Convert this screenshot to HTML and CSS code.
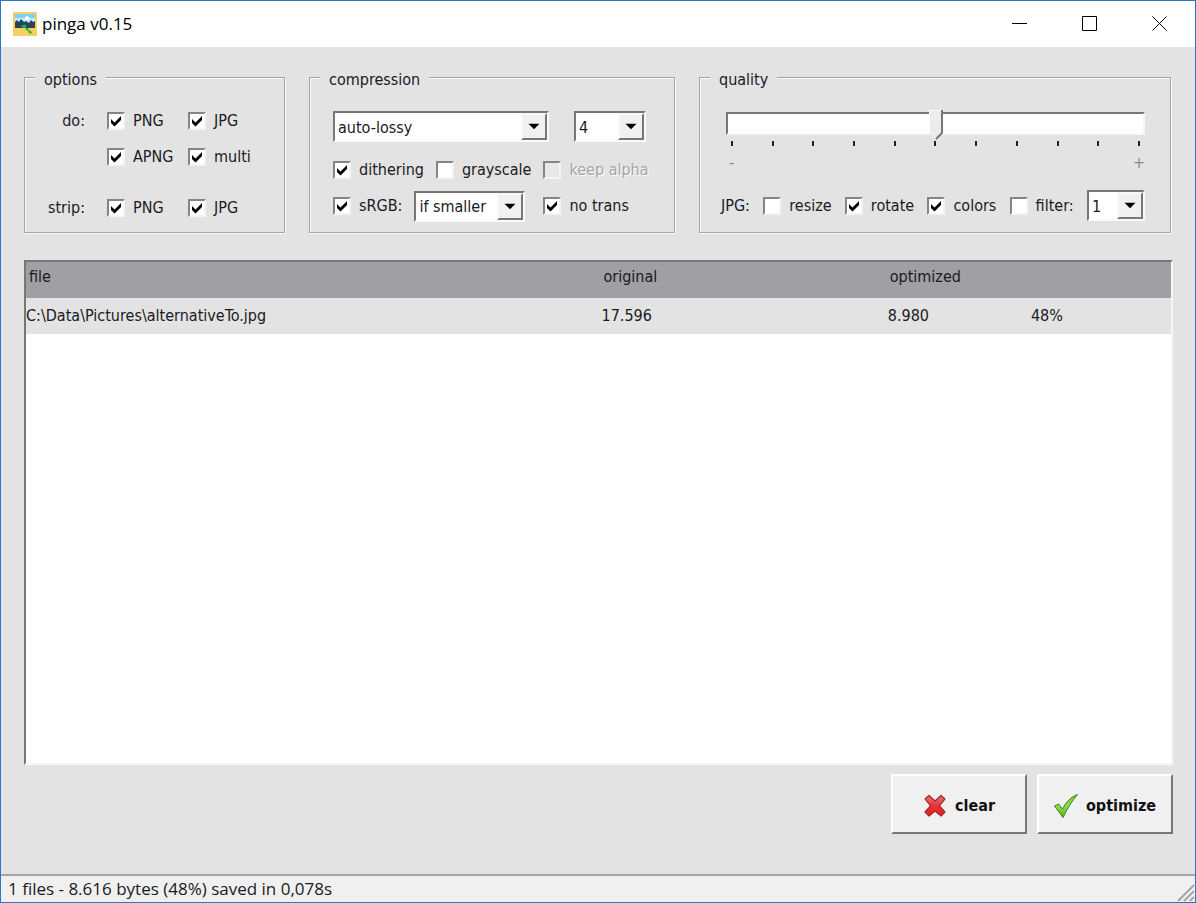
FILE: index.html
```html
<!DOCTYPE html>
<html lang="en">
<head>
  <meta charset="UTF-8" />
  <meta name="viewport" content="width=device-width, initial-scale=1.0"/>
  <title>pinga v0.15</title>
  <link rel="stylesheet" href="styles.css">
</head>
<body>

  <div class="window">
    <header class="titlebar">
      <svg class="app-icon" viewBox="0 0 24 24" aria-hidden="true">
        <rect width="24" height="24" fill="#f5d063"/>
        <rect x="2" y="2" width="20" height="14" fill="#7fd0f5"/>
        <rect x="2" y="6" width="20" height="6" fill="#c5ecfb"/>
        <circle cx="14" cy="6" r="2" fill="#fff"/>
        <path d="M2 10l2-2 2 2 2-3 3 3 2-1 3 2 2-3 2 2 2-1v7H2z" fill="#2c4258"/>
        <path d="M8 13.500l5-1v4l-2-1-1 1zM12 15l3 1 1 3-3-1zM15 18l3 1 1 3-3-1z" fill="#22b14c"/>
      </svg>
      <h1>pinga v0.15</h1>
      <div class="window-controls">
        <button type="button" aria-label="Minimize">
          <svg viewBox="0 0 16 16"><path d="M0 7.500h15"/></svg>
        </button>
        <button type="button" aria-label="Maximize">
          <svg viewBox="0 0 16 16"><path d="M.5.5h14v14H.5z"/></svg>
        </button>
        <button type="button" aria-label="Close">
          <svg viewBox="0 0 16 16"><path d="M.5.500l14 14M14.500.5l-14 14"/></svg>
        </button>
      </div>
    </header>

    <main>
      <form class="settings">
        <fieldset>
          <legend>options</legend>
          <div class="options-grid">
            <span class="row-label">do:</span>
            <label><input type="checkbox" checked />PNG</label>
            <label><input type="checkbox" checked />JPG</label>
            <span></span>
            <label><input type="checkbox" checked />APNG</label>
            <label><input type="checkbox" checked />multi</label>
            <span class="row-label">strip:</span>
            <label><input type="checkbox" checked />PNG</label>
            <label><input type="checkbox" checked />JPG</label>
          </div>
        </fieldset>

        <fieldset>
          <legend>compression</legend>
          <div class="compression">
            <div class="combos">
              <span class="combo mode">
                <select aria-label="Compression mode"><option>auto-lossy</option></select>
                <svg viewBox="0 0 24 24" aria-hidden="true"><path d="M6 9h12l-6 6z"/></svg>
              </span>
              <span class="combo level">
                <select aria-label="Compression level"><option>4</option></select>
                <svg viewBox="0 0 24 24" aria-hidden="true"><path d="M6 9h12l-6 6z"/></svg>
              </span>
            </div>
            <div class="checks">
              <label><input type="checkbox" checked />dithering</label>
              <label><input type="checkbox" />grayscale</label>
              <label class="disabled"><input type="checkbox" disabled />keep alpha</label>
            </div>
            <div class="checks">
              <label><input type="checkbox" checked />sRGB:</label>
              <span class="combo srgb">
                <select aria-label="sRGB"><option>if smaller</option></select>
                <svg viewBox="0 0 24 24" aria-hidden="true"><path d="M6 9h12l-6 6z"/></svg>
              </span>
              <label class="trans"><input type="checkbox" checked />no trans</label>
            </div>
          </div>
        </fieldset>

        <fieldset>
          <legend>quality</legend>
          <div class="quality">
            <input class="slider" type="range" min="0" max="10" value="5" aria-label="Quality" />
            <div class="ticks">
              <i></i><i></i><i></i><i></i><i></i><i></i><i></i><i></i><i></i><i></i><i></i>
            </div>
            <div class="range-ends"><span>-</span><span>+</span></div>
            <div class="jpg-row">
              <span>JPG:</span>
              <label><input type="checkbox" />resize</label>
              <label><input type="checkbox" checked />rotate</label>
              <label><input type="checkbox" checked />colors</label>
              <label><input type="checkbox" />filter:</label>
              <span class="combo filter">
                <select aria-label="Filter"><option>1</option></select>
                <svg viewBox="0 0 24 24" aria-hidden="true"><path d="M6 9h12l-6 6z"/></svg>
              </span>
            </div>
          </div>
        </fieldset>
      </form>

      <div class="file-list">
        <table>
          <thead>
            <tr><th class="col-file">file</th><th class="col-size">original</th><th class="col-opt">optimized</th><th class="col-ratio"></th></tr>
          </thead>
          <tbody>
            <tr><td>C:\Data\Pictures\alternativeTo.jpg</td><td>17.596</td><td>8.980</td><td>48%</td></tr>
          </tbody>
        </table>
      </div>

      <div class="actions">
        <button type="button">
          <svg viewBox="0 0 24 24" aria-hidden="true">
            <defs>
              <linearGradient id="red" x1="0" y1="0" x2="0" y2="1">
                <stop offset="0" stop-color="#e8767a"/>
                <stop offset=".5" stop-color="#e0353a"/>
                <stop offset="1" stop-color="#f21d1d"/>
              </linearGradient>
            </defs>
            <path d="M2 5l4-3.500 6 5.500 6-5.500 4 3.500-5.500 7 5.500 6-4 4-6-5-6 5-4-4 5.500-6z" fill="url(#red)" stroke="#a3262a" stroke-width="1.200" stroke-linejoin="round"/>
          </svg>
          clear
        </button>
        <button type="button">
          <svg viewBox="0 0 24 24" aria-hidden="true">
            <defs>
              <linearGradient id="green" x1="0" y1="0" x2="0" y2="1">
                <stop offset="0" stop-color="#7ccb3f"/>
                <stop offset=".5" stop-color="#8fdc4a"/>
                <stop offset="1" stop-color="#4fb61c"/>
              </linearGradient>
            </defs>
            <path d="M.5 12l4-2 4 5C12 8 17 3 23.500.500 18 7 13 15 9 23.500z" fill="url(#green)" stroke="#3f8222" stroke-width="1" stroke-linejoin="round"/>
          </svg>
          optimize
        </button>
      </div>
    </main>

    <footer class="statusbar">
      <p>1 files - 8.616 bytes (48%) saved in 0,078s</p>
      <svg class="grip" viewBox="0 0 18 18" aria-hidden="true"><path d="M1 17L17 1M7 17L17 7M13 17l4-4"/></svg>
    </footer>
  </div>

</body>
</html>
```

FILE: styles.css
```css
* {
  box-sizing: border-box;
  margin: 0;
  padding: 0;
}

body {
  font-family: "DejaVu Sans Condensed", "Noto Sans", sans-serif;
  font-size: 16px;
  line-height: 20px;
  color: #1a1a22;
}

.window {
  display: flex;
  flex-direction: column;
  min-height: 100vh;
  background: #e3e3e3;
  border: 1px solid #2a78bd;
}

/* title bar */
.titlebar {
  display: flex;
  align-items: center;
  height: 46px;
  padding-left: 12px;
  background: #fff;
}

.app-icon {
  width: 24px;
  height: 24px;
}

h1 {
  flex: 1;
  margin-left: 5px;
  font-family: "Open Sans", sans-serif;
  font-size: 17px;
  font-weight: normal;
  color: #000;
}

.window-controls {
  display: flex;
}

.window-controls button {
  display: flex;
  align-items: center;
  justify-content: center;
  width: 70px;
  height: 46px;
  background: none;
  border: none;
}

.window-controls svg {
  width: 16px;
  height: 16px;
  fill: none;
  stroke: #000;
}

main {
  display: flex;
  flex: 1;
  flex-direction: column;
  padding: 17px 22px 40px 23px;
}

/* option groups */
.settings {
  display: grid;
  grid-template-columns: 261fr 366fr 472fr;
  gap: 24px;
  padding-right: 2px;
}

fieldset {
  min-width: 0;
  height: 169px;
  border: 1px solid #a5a5a5;
  box-shadow: 1px 1px 0 #fafafa, inset 1px 1px 0 #fafafa;
}

legend {
  margin-left: 10px;
  padding: 6px 9px 0;
  background: #e3e3e3;
}

label {
  display: flex;
  align-items: center;
  gap: 8px;
  white-space: nowrap;
}

input[type="checkbox"] {
  flex: none;
  appearance: none;
  width: 18px;
  height: 18px;
  background: #fff;
  border: 2px solid;
  border-color: #858585 #f4f4f4 #f4f4f4 #858585;
}

input[type="checkbox"]:checked {
  background: #fff url("data:image/svg+xml,%3Csvg xmlns='http://www.w3.org/2000/svg' viewBox='0 0 14 14'%3E%3Cpath d='M2 5l3.500 3.500L12 2v4l-6.500 6.500L2 9z'/%3E%3C/svg%3E") center / 14px 14px;
}

input[type="checkbox"]:disabled {
  background: #e8e8e8;
}

.disabled {
  color: #a5a5a5;
  text-shadow: 1px 1px 0 #fff;
}

.options-grid {
  display: grid;
  grid-template-columns: 60px 59px 1fr;
  grid-template-rows: 36px 36px 66px;
  column-gap: 22px;
  align-items: center;
  padding-top: 13px;
}

.row-label {
  text-align: right;
}

/* drop-downs */
.combo {
  display: grid;
  height: 31px;
  background: #fff;
  border: 2px solid;
  border-color: #777 #fafafa #fafafa #777;
}

.combo select,
.combo svg {
  grid-area: 1 / 1;
}

.combo select {
  appearance: none;
  width: 100%;
  padding: 2px 0 0 3px;
  font: inherit;
  color: inherit;
  background: none;
  border: none;
}

.combo svg {
  justify-self: end;
  width: 26px;
  height: 100%;
  background: #f0f0f0;
  border: 2px solid;
  border-color: #f8f8f8 #777 #777 #f8f8f8;
  pointer-events: none;
}

.mode {
  width: 216px;
}

.level {
  width: 72px;
}

.srgb {
  width: 111px;
}

.filter {
  width: 58px;
}

.compression {
  padding: 21px 22px 0 23px;
}

.combos {
  display: flex;
  gap: 25px;
  margin-bottom: 10px;
}

.checks {
  display: flex;
  align-items: center;
  gap: 12px;
  height: 36px;
}

.trans {
  margin-left: 6px;
}

/* quality slider */
.quality {
  padding: 18px 25px 0 21px;
}

.slider {
  display: block;
  appearance: none;
  width: calc(100% - 5px);
  height: 30px;
  margin-left: 5px;
  background: none;
}

.slider::-webkit-slider-runnable-track {
  height: 23px;
  background: #fff;
  border: 2px solid;
  border-color: #777 #f6f6f6 #f6f6f6 #777;
}

.slider::-webkit-slider-thumb {
  appearance: none;
  width: 14px;
  height: 30px;
  margin-top: -4px;
  background: url("data:image/svg+xml,%3Csvg xmlns='http://www.w3.org/2000/svg' viewBox='0 0 14 30'%3E%3Cpath d='M0 0h14v23l-7 7-7-7z' fill='%23ececec'/%3E%3Cpath d='M.5 23V.5H13' fill='none' stroke='%23fff'/%3E%3Cpath d='M13 0v23l-6 6' fill='none' stroke='%23777' stroke-width='2'/%3E%3C/svg%3E");
}

.ticks {
  display: flex;
  justify-content: space-between;
  margin-top: 3px;
  padding: 0 5px 0 10px;
}

.ticks i {
  width: 2px;
  height: 5px;
  background: #222;
}

.range-ends {
  display: flex;
  justify-content: space-between;
  margin-top: 7px;
  padding-left: 8px;
  color: #888;
}

.jpg-row {
  display: flex;
  align-items: center;
  justify-content: space-between;
  margin-top: 17px;
}

/* file list */
.file-list {
  flex: 1;
  margin-top: 27px;
  background: #fff;
  border: 2px solid;
  border-color: #777 #f6f6f6 #f6f6f6 #777;
}

table {
  width: 100%;
  table-layout: fixed;
  border-collapse: collapse;
}

th,
td {
  height: 36px;
  padding-left: 3px;
  text-align: left;
  font-weight: normal;
}

th {
  padding: 0 0 7px 5px;
  background: #a09fa4;
}

th:first-child {
  padding-left: 3px;
}

td {
  background: #e3e3e3;
}

td:first-child {
  padding-left: 0;
}

.col-file {
  width: 50%;
}

.col-size {
  width: 25%;
}

.col-opt,
.col-ratio {
  width: 12.5%;
}

.actions {
  display: flex;
  justify-content: flex-end;
  gap: 10px;
  margin-top: 9px;
}

.actions button {
  display: flex;
  align-items: center;
  justify-content: center;
  gap: 8px;
  width: 136px;
  height: 60px;
  padding-top: 4px;
  font: inherit;
  font-weight: bold;
  color: #111;
  background: #f0f0f0;
  border: 2px solid;
  border-color: #fff #777 #777 #fff;
}

.actions svg {
  width: 24px;
  height: 24px;
}

.statusbar {
  display: flex;
  align-items: center;
  justify-content: space-between;
  height: 28px;
  padding-left: 7px;
  font-family: "Open Sans", sans-serif;
  font-size: 17px;
  background: #f0f0f0;
  border-top: 2px solid #a5a5a5;
}

.grip {
  width: 18px;
  height: 18px;
  align-self: flex-end;
  fill: none;
  stroke: #a5a5a5;
  stroke-width: 2;
}
```
